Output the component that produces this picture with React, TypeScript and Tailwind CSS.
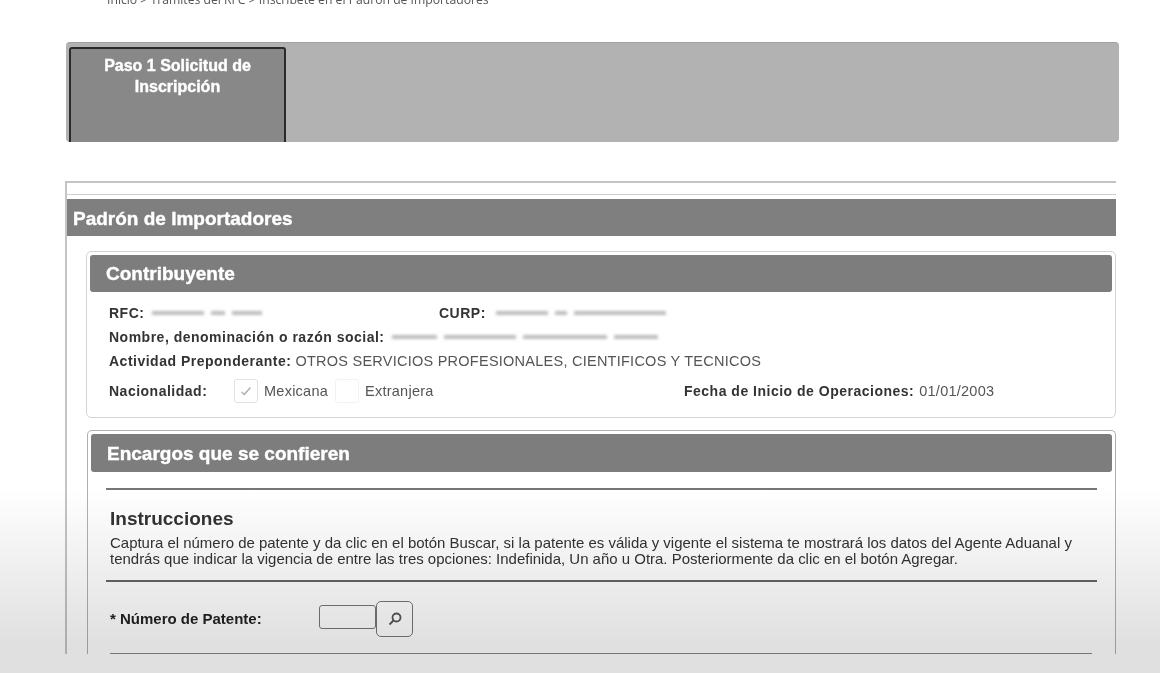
import React from "react";

function Redacted({ segments }: { segments: number[] }) {
  return (
    <span className="inline-flex items-center gap-[7px] blur-[1.8px]">
      {segments.map((w, i) => (
        <span key={i} className="h-[4px] bg-[#bdbdbd] inline-block" style={{ width: w }} />
      ))}
    </span>
  );
}

function CardHeader({ title, offset }: { title: string; offset: string }) {
  return (
    <div className={`rounded-[3px] bg-[#7d7d7d] pl-[16px] flex items-center text-white font-bold text-[19px] [-webkit-text-stroke:0.4px_white] ${offset}`}>
      {title}
    </div>
  );
}

const label = "font-bold text-[#333] text-[14px] tracking-[0.5px]";
const value = "text-[#555] text-[14.5px] tracking-[0.25px] pt-[2px]";

export default function App() {
  return (
    <div className="relative w-[1160px] h-[673px] overflow-hidden bg-white font-['Liberation_Sans',Arial,sans-serif]">
      <div className="flex flex-col h-[673px] overflow-hidden blur-[0.4px]">
        <div className="flex h-[42px] pl-[107px]">
          <p className="-mt-[7px] h-[14px] leading-[14px] text-[12.2px] text-[#555] font-['Open_Sans',sans-serif] whitespace-nowrap">
            Inicio &gt; Trámites del RFC &gt; Inscríbete en el Padrón de Importadores
          </p>
        </div>

        <div className="ml-[66px] w-[1053px] h-[100px] rounded-[4px] bg-[#b2b2b2] border-t border-[#a0a0a0] pt-[4px] pl-[3px]">
          <div className="w-[217px] h-[95px] rounded-t-[3px] bg-[#888888] border-x-2 border-t-2 border-[#2a2a2a] pt-[6px] text-center text-white font-bold text-[16px] leading-[21px] [-webkit-text-stroke:0.4px_white]">
            Paso 1 Solicitud de
            <br />
            Inscripción
          </div>
        </div>

        <div className="ml-[65px] mt-[39px] w-[1051px] h-[473px] border-l-2 border-t-2 border-[#c4c4c4] overflow-hidden">
          <div className="h-[12px] border-b border-[#cfcfcf]" />
          <div className="mt-[4px] h-[37px] bg-[#7f7f7f] pl-[6px] pt-[3px] flex items-center text-white font-bold text-[19px] [-webkit-text-stroke:0.4px_white]">
            Padrón de Importadores
          </div>

          <div className="ml-[19px] mt-[15px] h-[167px] rounded-[5px] border border-[#d4d4d4] p-[3px]">
            <CardHeader title="Contribuyente" offset="h-[37px] pt-[1px]" />
            <div className="pl-[19px] pt-[9px]">
              <div className="h-[24px] flex items-center whitespace-nowrap">
                <span className={`${label} w-[330px]`}>
                  <span className="inline-flex items-center gap-[8px]">
                    RFC: <Redacted segments={[52, 14, 30]} />
                  </span>
                </span>
                <span className={`${label} inline-flex items-center gap-[10px]`}>
                  CURP: <Redacted segments={[52, 12, 92]} />
                </span>
              </div>
              <div className="h-[24px] flex items-center gap-[8px] whitespace-nowrap">
                <span className={label}>Nombre, denominación o razón social:</span>
                <Redacted segments={[45, 72, 84, 44]} />
              </div>
              <div className="h-[24px] flex items-center gap-[4px] whitespace-nowrap">
                <span className={label}>Actividad Preponderante:</span>
                <span className={value}>OTROS SERVICIOS PROFESIONALES, CIENTIFICOS Y TECNICOS</span>
              </div>
              <div className="mt-[6px] h-[24px] flex items-center whitespace-nowrap">
                <span className={`${label} w-[125px]`}>Nacionalidad:</span>
                <span className="w-[24px] h-[24px] rounded-[3px] border border-[#e2e2e2] flex items-center justify-center">
                  <svg viewBox="0 0 16 16" className="w-[14px] h-[14px]" fill="none" stroke="#aaa" strokeWidth="1.5">
                    <path d="M3 9l3 3 7-8" />
                  </svg>
                </span>
                <span className={`${value} ml-[6px] w-[71px]`}>Mexicana</span>
                <span className="w-[24px] h-[24px] rounded-[3px] border border-[#f2f2f2]" />
                <span className={`${value} ml-[6px] w-[319px]`}>Extranjera</span>
                <span className={label}>Fecha de Inicio de Operaciones:</span>
                <span className={`${value} ml-[5px]`}>01/01/2003</span>
              </div>
            </div>
          </div>

          <div className="ml-[20px] mt-[12px] h-[260px] rounded-t-[5px] border border-b-0 border-[#b0b0b0] p-[3px]">
            <CardHeader title="Encargos que se confieren" offset="h-[38px] pt-[2px]" />
            <div className="mx-[15px] mt-[16px] border-t-2 border-[#777]" />
            <div className="ml-[19px] mr-[15px] pt-[19px]">
              <h2 className="font-bold text-[19px] leading-[20px] text-[#333]">Instrucciones</h2>
              <p className="mt-[6px] text-[14.98px] leading-[16px] text-[#333] w-[985px]">
                Captura el número de patente y da clic en el botón Buscar, si la patente es válida y vigente el sistema te mostrará los datos del Agente Aduanal y tendrás que indicar la vigencia de entre las tres opciones: Indefinida, Un año u Otra. Posteriormente da clic en el botón Agregar.
              </p>
            </div>
            <div className="mx-[15px] mt-[13px] border-t-2 border-[#666]" />
            <div className="ml-[19px] mt-[19px] h-[36px] flex items-center">
              <span className="w-[209px] font-bold text-[15px] text-[#222]">* Número de Patente:</span>
              <span className="w-[57px] h-[24px] -mt-[4px] rounded-[3px] border border-[#777]" />
              <span className="w-[37px] h-[36px] rounded-[5px] border border-[#777] flex items-center justify-center">
                <svg viewBox="0 0 16 16" className="w-[16px] h-[16px]" fill="none" stroke="#555" strokeWidth="1.8">
                  <circle cx="9.5" cy="6.5" r="4" />
                  <path d="M6.5 9.5L2.5 13.5" />
                </svg>
              </span>
            </div>
            <div className="ml-[19px] mr-[20px] mt-[16px] border-t border-[#888]" />
          </div>
        </div>
      </div>

      <div className="absolute inset-x-0 top-[480px] bottom-0 pointer-events-none mix-blend-multiply bg-gradient-to-b from-white from-[5%] to-[#e0e0e0] to-[85%]" />
    </div>
  );
}
